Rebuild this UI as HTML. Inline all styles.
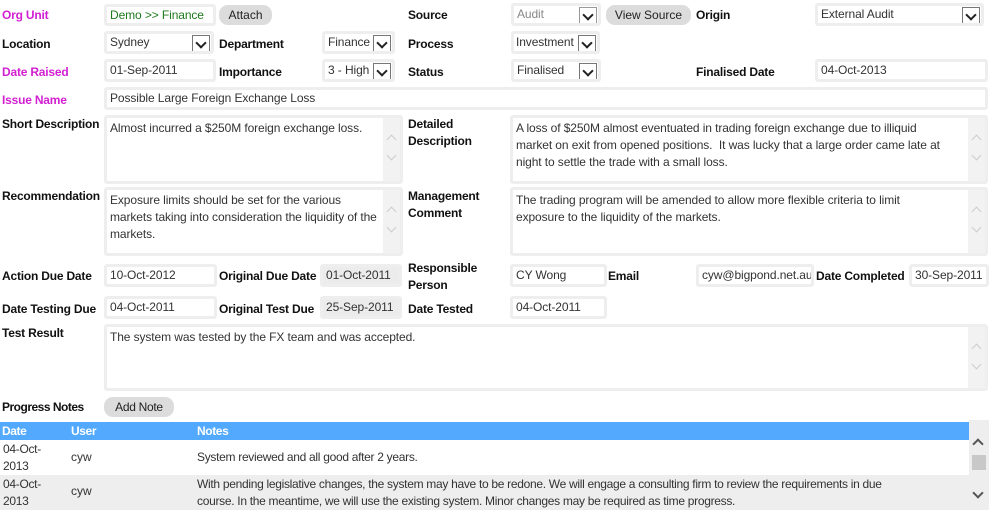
<!DOCTYPE html>
<html><head><meta charset="utf-8"><style>
*{box-sizing:border-box;margin:0;padding:0}
body{width:989px;height:510px;overflow:hidden;background:#fff;font-family:"Liberation Sans",Arial,sans-serif;font-size:12px;color:#222;position:relative}
.a{position:absolute}
.l{position:absolute;font-weight:bold;font-size:12px;color:#111;line-height:17px;letter-spacing:-0.2px}
.m{color:#d21fd2}
.f{position:absolute;background:#fff;border:3px solid #eeeeee;border-radius:3px;padding:1px 3px;line-height:15px;color:#333;white-space:nowrap;overflow:hidden;letter-spacing:-0.1px}
.g{background:#ececec}
.s .dd{position:absolute;right:1px;top:1px;width:18px;height:18px;border:1px solid #777;background:#fff}
.s .dd:after{content:"";position:absolute;left:4px;top:3px;width:6px;height:6px;border-right:2px solid #222;border-bottom:2px solid #222;transform:rotate(45deg)}
.b{position:absolute;background:#dcdcdc;border-radius:9px;text-align:center;line-height:20px;color:#222;height:20px}
.t{position:absolute;background:#fff;border:3px solid #eeeeee;border-radius:3px;padding:2px 20px 0 3px;line-height:17px;color:#333;letter-spacing:-0.1px}
.t .sb{position:absolute;right:0;top:0;bottom:0;width:17px;background:#f2f2f2}
.t .sb:before,.t .sb:after{content:"";position:absolute;left:5px;width:6px;height:6px;border-left:1.5px solid #ccc;border-top:1.5px solid #ccc}
.t .sb:before{top:18px;transform:rotate(45deg)}
.t .sb:after{top:34px;transform:rotate(225deg)}
</style></head><body>
<div class="l m" style="left:2px;top:7px">Org Unit</div>
<div class="f" style="left:104px;top:4px;width:112px;height:22px;color:#1d7a1d">Demo &gt;&gt; Finance</div>
<div class="b" style="left:219px;top:5px;width:53px">Attach</div>
<div class="l" style="left:408px;top:7px">Source</div>
<div class="f s" style="left:511px;top:3px;width:90px;height:23px;color:#888">Audit<div class="dd" style="border-color:#999"></div></div>
<div class="b" style="left:606px;top:5px;width:85px">View Source</div>
<div class="l" style="left:696px;top:7px">Origin</div>
<div class="f s" style="left:815px;top:3px;width:169px;height:23px">External Audit<div class="dd"></div></div>
<div class="l" style="left:2px;top:36px">Location</div>
<div class="f s" style="left:104px;top:31px;width:110px;height:23px">Sydney<div class="dd"></div></div>
<div class="l" style="left:219px;top:36px">Department</div>
<div class="f s" style="left:322px;top:31px;width:73px;height:23px">Finance<div class="dd"></div></div>
<div class="l" style="left:408px;top:36px">Process</div>
<div class="f s" style="left:511px;top:31px;width:89px;height:23px;padding-left:2px">Investment<div class="dd"></div></div>
<div class="l m" style="left:2px;top:64px">Date Raised</div>
<div class="f" style="left:104px;top:59px;width:112px;height:23px">01-Sep-2011</div>
<div class="l" style="left:219px;top:64px">Importance</div>
<div class="f s" style="left:322px;top:59px;width:73px;height:23px">3 - High<div class="dd"></div></div>
<div class="l" style="left:408px;top:64px">Status</div>
<div class="f s" style="left:511px;top:59px;width:90px;height:23px">Finalised<div class="dd"></div></div>
<div class="l" style="left:696px;top:64px">Finalised Date</div>
<div class="f" style="left:815px;top:59px;width:173px;height:23px">04-Oct-2013</div>
<div class="l m" style="left:2px;top:92px">Issue Name</div>
<div class="f" style="left:104px;top:87px;width:884px;height:23px">Possible Large Foreign Exchange Loss</div>
<div class="l" style="left:2px;top:116px">Short Description</div>
<div class="t" style="left:104px;top:115px;width:299px;height:69px">Almost incurred a $250M foreign exchange loss.<div class="sb"></div></div>
<div class="l" style="left:408px;top:116px">Detailed<br>Description</div>
<div class="t" style="left:510px;top:115px;width:478px;height:69px;padding-right:34px">A loss of $250M almost eventuated in trading foreign exchange due to illiquid market on exit from opened positions.&nbsp; It was lucky that a large order came late at night to settle the trade with a small loss.<div class="sb"></div></div>
<div class="l" style="left:2px;top:188px">Recommendation</div>
<div class="t" style="left:104px;top:187px;width:299px;height:69px">Exposure limits should be set for the various markets taking into consideration the liquidity of the markets.<div class="sb"></div></div>
<div class="l" style="left:408px;top:188px">Management<br>Comment</div>
<div class="t" style="left:510px;top:187px;width:478px;height:69px;padding-right:60px">The trading program will be amended to allow more flexible criteria to limit exposure to the liquidity of the markets.<div class="sb"></div></div>
<div class="l" style="left:2px;top:268px">Action Due Date</div>
<div class="f" style="left:104px;top:264px;width:113px;height:23px">10-Oct-2012</div>
<div class="l" style="left:219px;top:268px">Original Due Date</div>
<div class="f g" style="left:320px;top:264px;width:82px;height:23px;border-color:#eee">01-Oct-2011</div>
<div class="l" style="left:408px;top:260px">Responsible<br>Person</div>
<div class="f" style="left:510px;top:264px;width:97px;height:23px">CY Wong</div>
<div class="l" style="left:608px;top:268px">Email</div>
<div class="f" style="left:696px;top:264px;width:118px;height:23px">cyw@bigpond.net.au</div>
<div class="l" style="left:816px;top:268px">Date Completed</div>
<div class="f" style="left:909px;top:264px;width:80px;height:23px">30-Sep-2011</div>
<div class="l" style="left:2px;top:301px">Date Testing Due</div>
<div class="f" style="left:104px;top:296px;width:113px;height:23px">04-Oct-2011</div>
<div class="l" style="left:219px;top:301px">Original Test Due</div>
<div class="f g" style="left:320px;top:296px;width:82px;height:23px">25-Sep-2011</div>
<div class="l" style="left:408px;top:301px">Date Tested</div>
<div class="f" style="left:510px;top:296px;width:97px;height:23px">04-Oct-2011</div>
<div class="l" style="left:2px;top:325px">Test Result</div>
<div class="t" style="left:104px;top:324px;width:884px;height:67px">The system was tested by the FX team and was accepted.<div class="sb"></div></div>
<div class="l" style="left:2px;top:399px;letter-spacing:-0.5px">Progress Notes</div>
<div class="b" style="left:104px;top:397px;width:70px;letter-spacing:-0.3px">Add Note</div>
<div class="a" style="left:0;top:422px;width:969px;height:18px;background:#52a9fe"></div>
<div class="a" style="left:2px;top:422px;color:#fff;font-weight:bold;line-height:18px;letter-spacing:-0.4px">Date</div>
<div class="a" style="left:71px;top:422px;color:#fff;font-weight:bold;line-height:18px;letter-spacing:-0.4px">User</div>
<div class="a" style="left:197px;top:422px;color:#fff;font-weight:bold;line-height:18px;letter-spacing:-0.4px">Notes</div>
<div class="a" style="left:0;top:475px;width:969px;height:35px;background:#eeeeee"></div>
<div class="a" style="left:3px;top:441px;line-height:17px;color:#333;letter-spacing:-0.3px">04-Oct-<br>2013</div>
<div class="a" style="left:71px;top:450px;color:#333">cyw</div>
<div class="a" style="left:197px;top:450px;color:#333;letter-spacing:-0.3px">System reviewed and all good after 2 years.</div>
<div class="a" style="left:3px;top:476px;line-height:17px;color:#333;letter-spacing:-0.3px">04-Oct-<br>2013</div>
<div class="a" style="left:71px;top:484px;color:#333">cyw</div>
<div class="a" style="left:197px;top:476px;width:760px;line-height:17px;color:#333;letter-spacing:-0.3px;white-space:nowrap">With pending legislative changes, the system may have to be redone. We will engage a consulting firm to review the requirements in due<br>course. In the meantime, we will use the existing system. Minor changes may be required as time progress.</div>
<div class="a" style="left:969px;top:420px;width:20px;height:90px;background:#eeeeee"></div>
<div class="a" style="left:972px;top:455px;width:14px;height:15px;background:#c8c8c8"></div>
<div class="a" style="left:974px;top:440px;width:8px;height:8px;border-left:2px solid #555;border-top:2px solid #555;transform:rotate(45deg)"></div>
<div class="a" style="left:974px;top:489px;width:8px;height:8px;border-right:2px solid #555;border-bottom:2px solid #555;transform:rotate(45deg)"></div>
</body></html>
